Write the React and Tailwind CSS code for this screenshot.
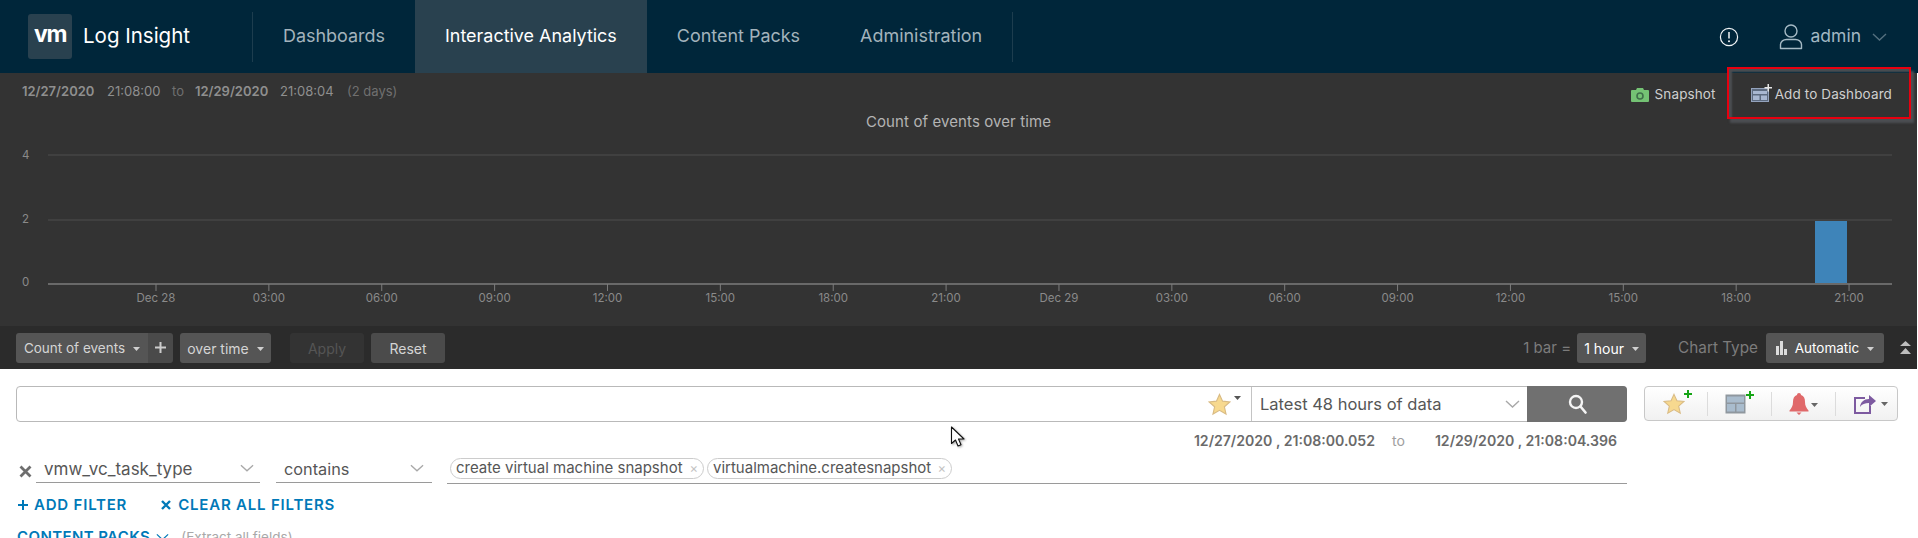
import React from "react";

const Caret = ({ c = "#d0d0d0" }) => (
  <svg width="7" height="4" viewBox="0 0 7 4" className="shrink-0"><path d="M0 0h7L3.500 4z" fill={c} /></svg>
);
const Chevron = ({ c = "#9a9a9a", w = 15, h = 8 }) => (
  <svg width={w} height={h} viewBox="0 0 15 8" className="shrink-0"><path d="M1 1l6.500 6L14 1" fill="none" stroke={c} strokeWidth="1.400" /></svg>
);
const Star = ({ size = 22 }) => (
  <svg width={size} height={size} viewBox="0 0 24 24" className="shrink-0">
    <path d="M12 1.500l3.200 7 7.600.8-5.700 5.100 1.700 7.600L12 18.100 5.200 22l1.700-7.600L1.200 9.300l7.600-.8z" fill="#f7d98f" stroke="#d9bb84" strokeWidth="1.200" />
  </svg>
);
const Plus = () => (
  <svg width="8" height="8" viewBox="0 0 8 8" className="shrink-0"><path d="M3 0h2v3h3v2H5v3H3V5H0V3h3z" fill="#16a516" /></svg>
);

const ticks = ["Dec 28","03:00","06:00","09:00","12:00","15:00","18:00","21:00","Dec 29","03:00","06:00","09:00","12:00","15:00","18:00","21:00"];

function Chart() {
  return (
    <svg width="1917" height="192" viewBox="0 134 1917 192" className="block">
      <g stroke="#464646" strokeWidth="1.500">
        <path d="M48 155H1892" />
        <path d="M48 220H1892" />
      </g>
      <rect x="1815" y="221" width="32" height="62" fill="#3e84b9" />
      <path d="M48 284H1892" stroke="#7c7c7c" strokeWidth="1.500" />
      <g fill="#8a8a8a" fontSize="11.500" fontFamily="Inter, sans-serif">
        <text x="22" y="159">4</text>
        <text x="22" y="223">2</text>
        <text x="22" y="286">0</text>
      </g>
      {ticks.map((t, i) => {
        const x = 156 + i * 112.87;
        return (
          <g key={i}>
            <path d={`M${x} 284V291`} stroke="#7c7c7c" strokeWidth="1" />
            <text x={x} y="302" textAnchor="middle" fill="#8a8a8a" fontSize="11.500" fontFamily="Inter, sans-serif">{t}</text>
          </g>
        );
      })}
    </svg>
  );
}

const NavItem = ({ active, children }) => (
  <div className={`h-full flex items-center px-[30px] pb-px text-[17.950px] whitespace-nowrap ${active ? "bg-[#29414f] text-white" : "text-[#a3b3bc]"}`}>{children}</div>
);

const DarkBtn = ({ className = "", children }) => (
  <div className={`h-[30px] pt-[2px] flex items-center justify-center gap-2 whitespace-nowrap ${className}`}>{children}</div>
);

const Chip = ({ w, children }) => (
  <div className={`h-[21px] ${w} flex items-center justify-between pl-[5px] pr-[5px] border border-[#cccccc] rounded-full text-[15px] text-[#565656] whitespace-nowrap`}>
    <span>{children}</span>
    <span className="text-[13px] leading-none text-[#c4c4c4]">×</span>
  </div>
);

export default function App() {
  return (
    <div className="relative w-[1918px] h-[538px] overflow-hidden bg-white font-['Inter',sans-serif]">
      {/* Header */}
      <header className="h-[73px] flex items-center bg-[#00263a]">
        <div className="w-[252px] h-full flex items-center pl-[28px]">
          <div className="w-[44px] h-[45px] rounded-[3px] bg-[#29414f] flex items-center justify-center text-white text-[23px] font-bold tracking-[-1.5px] leading-none pb-[4px]">vm</div>
          <div className="ml-[11px] text-[20.500px] text-white whitespace-nowrap">Log Insight</div>
        </div>
        <div className="w-px h-[50px] bg-[#1d3d4e]" />
        <NavItem>Dashboards</NavItem>
        <NavItem active>Interactive Analytics</NavItem>
        <NavItem>Content Packs</NavItem>
        <NavItem>Administration</NavItem>
        <div className="w-px h-[50px] bg-[#1d3d4e]" />
        <div className="ml-auto flex items-center pr-[31px]">
          <svg width="20" height="20" viewBox="0 0 20 20" className="shrink-0">
            <circle cx="10" cy="10" r="8.600" fill="none" stroke="#f0f4f6" strokeWidth="1.200" />
            <path d="M10 5v6.500" stroke="#f0f4f6" strokeWidth="1.500" />
            <circle cx="10" cy="14.200" r="1" fill="#f0f4f6" />
          </svg>
          <svg width="24" height="26" viewBox="0 0 24 26" className="ml-[40px] shrink-0">
            <circle cx="12" cy="7" r="6" fill="none" stroke="#a5bac5" strokeWidth="1.400" />
            <path d="M1.500 24.500v-4c0-3 3-5 6-5h9c3 0 6 2 6 5v4z" fill="none" stroke="#a5bac5" strokeWidth="1.400" strokeLinejoin="round" />
          </svg>
          <span className="ml-[8px] text-[17.500px] text-[#a3b8c3]">admin</span>
          <span className="ml-[11px]"><Chevron c="#54707f" /></span>
        </div>
      </header>

      {/* Chart panel */}
      <section className="w-[1917px] h-[253px] bg-[#333333]">
        <div className="h-[37px] flex items-center justify-between pl-[22px] pr-[25px]">
          <div className="flex items-center text-[13px] text-[#8f8f8f] whitespace-nowrap">
            <b className="font-semibold w-[85px]">12/27/2020</b>
            <span className="w-[65px]">21:08:00</span>
            <span className="w-[23px] text-[#707070]">to</span>
            <b className="font-semibold w-[85px]">12/29/2020</b>
            <span className="w-[67px]">21:08:04</span>
            <span className="text-[#707070]">(2 days)</span>
          </div>
          <div className="flex items-center pt-[6px] text-[13.500px] tracking-[0.12px] text-[#cfcfcf] whitespace-nowrap">
            <svg width="18" height="14" viewBox="0 0 18 14" className="shrink-0">
              <path d="M1 2h4l1-2h6l1 2h4a1 1 0 0 1 1 1v10a1 1 0 0 1-1 1H1a1 1 0 0 1-1-1V3a1 1 0 0 1 1-1z" fill="#74c274" />
              <circle cx="9" cy="8" r="3" fill="none" stroke="#3f6f4a" strokeWidth="1.600" />
            </svg>
            <span className="ml-[6px]">Snapshot</span>
            <svg width="21" height="18" viewBox="0 0 21 18" className="ml-[35px] -mt-[4px] shrink-0">
              <rect x="0.500" y="4.500" width="17" height="13" fill="#5d6b80" stroke="#94a3bd" />
              <path d="M2 7h14v3H2zM2 11.500h6.500V16H2zM10 11.500h6V16h-6z" fill="#a8b7d1" />
              <path d="M16.500 0h1.500v3h3v1.500h-3v3h-1.500v-3h-3V3h3z" fill="#e6e6e6" />
            </svg>
            <span className="ml-[3px]">Add to Dashboard</span>
          </div>
        </div>
        <div className="h-[24px] flex items-center justify-center text-[15px] tracking-[0.1px] text-[#b4b4b4]">Count of events over time</div>
        <Chart />
      </section>

      {/* Toolbar */}
      <section className="w-[1917px] h-[43px] bg-[#2b2b2b] flex items-center pl-[16px] pr-[6px]">
        <DarkBtn className="w-[132px] rounded-l-[3px] bg-[#555555] text-[13.500px] text-[#d4d4d4]">Count of events <Caret /></DarkBtn>
        <DarkBtn className="w-[25px] rounded-r-[3px] bg-[#4a4a4a]">
          <svg width="11" height="11" viewBox="0 0 11 11" className="-mt-[2px]"><path d="M4.500 0h2v4.500H11v2H6.500V11h-2V6.500H0v-2h4.500z" fill="#cccccc" /></svg>
        </DarkBtn>
        <DarkBtn className="w-[91px] ml-[7px] rounded-[3px] bg-[#555555] text-[14px] text-[#d4d4d4]">over time <Caret /></DarkBtn>
        <DarkBtn className="w-[74px] ml-[19px] rounded-[3px] bg-[#333333] text-[14px] text-[#555555]">Apply</DarkBtn>
        <DarkBtn className="w-[74px] ml-[7px] rounded-[3px] bg-[#4b4b4b] text-[14px] text-[#d4d4d4]">Reset</DarkBtn>
        <span className="ml-auto pt-[2px] text-[15px] text-[#7c7c7c]">1 bar =</span>
        <DarkBtn className="w-[69px] ml-[6px] rounded-[3px] bg-[#555555] text-[14px] text-white">1 hour <Caret /></DarkBtn>
        <span className="ml-[32px] pt-[2px] text-[15.300px] text-[#7c7c7c] whitespace-nowrap">Chart Type</span>
        <DarkBtn className="w-[118px] ml-[8px] rounded-[3px] bg-[#555555] text-[13.500px] text-white">
          <svg width="11" height="14" viewBox="0 0 11 14" className="shrink-0 -mt-[2px]"><path d="M0 5h3v9H0zM4 0h3v14H4zM8 8h3v6H8z" fill="#dcdcdc" /></svg>
          Automatic <Caret />
        </DarkBtn>
        <svg width="11" height="13" viewBox="0 0 11 13" className="ml-[16px] shrink-0"><path d="M5.500 0L11 5H0zM5.500 7L11 13H0z" fill="#bdbdbd" /></svg>
      </section>

      {/* Search row */}
      <section className="pt-[17px] pl-[16px] flex items-start">
        <div className="w-[1611px] h-[36px] flex border border-[#b9b9b9] rounded-[4px]">
          <div className="flex-1 flex items-center justify-end pr-[10px] gap-[3px]">
            <Star size={23} />
            <span className="self-start mt-[9px]"><Caret c="#555555" /></span>
          </div>
          <div className="w-[276px] border-l border-[#c4c4c4] flex items-center justify-between pl-[8px] pr-[7px] text-[16.500px] text-[#565656]">
            Latest 48 hours of data
            <Chevron c="#a8a8a8" />
          </div>
          <div className="w-[100px] -my-px -mr-px bg-[#707070] rounded-r-[4px] flex items-center justify-center">
            <svg width="19" height="20" viewBox="0 0 19 20"><circle cx="8" cy="8" r="6" fill="none" stroke="#f4f4f4" strokeWidth="2.400" /><path d="M12.500 12.500l5 6" stroke="#f4f4f4" strokeWidth="2.600" strokeLinecap="round" /></svg>
          </div>
        </div>
        <div className="ml-[17px] w-[254px] h-[35px] flex items-center border border-[#c8c8c8] rounded-[4px] bg-linear-to-b from-white to-[#f1f1f1]">
          <div className="w-[62px] flex justify-center">
            <span className="relative pr-[4px]"><Star size={22} /><span className="absolute -top-[3px] -right-[3px] flex"><Plus /></span></span>
          </div>
          <div className="w-px h-[24px] bg-[#dcdcdc]" />
          <div className="w-[63px] pr-[8px] flex justify-center">
            <span className="relative">
              <svg width="21" height="20" viewBox="0 0 21 20" className="block"><rect x="0.500" y="0.500" width="20" height="19" fill="#8f979e" /><path d="M2 2.500h17v6H2zM2 10h8v7.500H2zM11.500 10H19v7.500h-7.500z" fill="#a9bccd" /></svg>
              <span className="absolute -top-[3px] -right-[8px] flex"><Plus /></span>
            </span>
          </div>
          <div className="w-px h-[24px] bg-[#dcdcdc]" />
          <div className="w-[63px] flex items-center justify-center gap-[2px]">
            <svg width="20" height="22" viewBox="0 0 20 22" className="shrink-0"><path d="M10 0c1.200 0 2 .8 2 2 3 1 4 3.500 4 7 0 4 1.500 6 3.500 8.500v1H.5v-1C2.500 15 4 13 4 9c0-3.500 1-6 4-7 0-1.200.8-2 2-2zM7.500 19.500h5L10 22z" fill="#e0696a" /></svg>
            <span className="mt-[2px]"><Caret c="#666666" /></span>
          </div>
          <div className="w-px h-[24px] bg-[#dcdcdc]" />
          <div className="flex-1 pl-[8px] flex items-center justify-center gap-[4px]">
            <svg width="23" height="21" viewBox="0 0 23 21" className="shrink-0"><path d="M11 5H1v15h15v-7" fill="none" stroke="#7d5aa0" strokeWidth="2" /><path d="M6 14c.5-5 4-8 9-8V2l7 6-7 6V10c-4 0-7 1-9 4z" fill="#7d5aa0" /></svg>
            <Caret c="#666666" />
          </div>
        </div>
      </section>

      {/* Dates */}
      <section className="h-[36px] pt-[2px] flex items-center justify-end pr-[301px] text-[14.100px] font-semibold text-[#6a6a6a] whitespace-nowrap">
        <span>12/27/2020 , 21:08:00.052</span>
        <span className="ml-[17px] mr-[30px] font-normal text-[#a0a0a0]">to</span>
        <span>12/29/2020 , 21:08:04.396</span>
      </section>

      {/* Filter row */}
      <section className="h-[26px] flex items-start pl-[19px]">
        <svg width="13" height="13" viewBox="0 0 13 13" className="mt-[7px] shrink-0"><path d="M1.500 1.500l10 10M11.500 1.500l-10 10" stroke="#6e6e6e" strokeWidth="2.800" /></svg>
        <div className="ml-[4px] w-[224px] h-[25px] border-b border-[#9a9a9a] flex items-center justify-between pl-[8px] pr-[6px] text-[17px] text-[#565656]">
          vmw_vc_task_type
          <span className="flex mb-[4px]"><Chevron c="#a8a8a8" w={14} /></span>
        </div>
        <div className="ml-[16px] w-[156px] h-[25px] pb-[2px] border-b border-[#9a9a9a] flex items-center justify-between pl-[8px] pr-[8px] text-[16.300px] text-[#565656]">
          contains
          <span className="flex mb-[2px]"><Chevron c="#a8a8a8" w={14} /></span>
        </div>
        <div className="ml-[15px] w-[1180px] h-[26px] border-b border-[#9a9a9a] flex items-start gap-[3px] pl-[3px]">
          <Chip w="w-[254px]">create virtual machine snapshot</Chip>
          <Chip w="w-[245px]">virtualmachine.createsnapshot</Chip>
        </div>
      </section>

      {/* Filter actions */}
      <section className="h-[42px] flex items-center pl-[18px] text-[15px] font-semibold tracking-[0.8px] text-[#0079b8] whitespace-nowrap">
        <svg width="10" height="10" viewBox="0 0 10 10" className="shrink-0"><path d="M4 0h2v4h4v2H6v4H4V6H0V4h4z" fill="#0079b8" /></svg>
        <span className="ml-[6px]">ADD FILTER</span>
        <svg width="10" height="10" viewBox="0 0 10 10" className="ml-[34px] shrink-0"><path d="M1 1l8 8M9 1L1 9" stroke="#0079b8" strokeWidth="2.400" /></svg>
        <span className="ml-[7px]">CLEAR ALL FILTERS</span>
      </section>

      {/* Content packs */}
      <section className="h-[22px] flex items-center pl-[17px] whitespace-nowrap">
        <span className="text-[15px] font-semibold tracking-[0.4px] text-[#0079b8]">CONTENT PACKS</span>
        <span className="ml-[6px]"><Chevron c="#0079b8" w={13} /></span>
        <span className="ml-[12px] text-[13.500px] text-[#a8a8a8]">(Extract all fields)</span>
      </section>

      {/* Red annotation around "Add to Dashboard" */}
      <div className="absolute left-[1727px] top-[67px] w-[184px] h-[52px] border-2 border-[#e8000f] shadow-[inset_3px_3px_2px_#4b4e52,3px_4px_2px_#4b4e52]" />

      {/* Mouse pointer */}
      <svg width="17" height="23" viewBox="0 0 17 23" className="absolute left-[950px] top-[426px]">
        <path d="M1.500 1v16.500l4-3.500 2.500 6 3-1.300-2.500-5.700H14z" fill="#fff" stroke="#111" strokeWidth="1.100" strokeLinejoin="round" style={{ filter: "drop-shadow(1.500px 1.500px 1px rgba(0,0,0,.35))" }} />
      </svg>
    </div>
  );
}
